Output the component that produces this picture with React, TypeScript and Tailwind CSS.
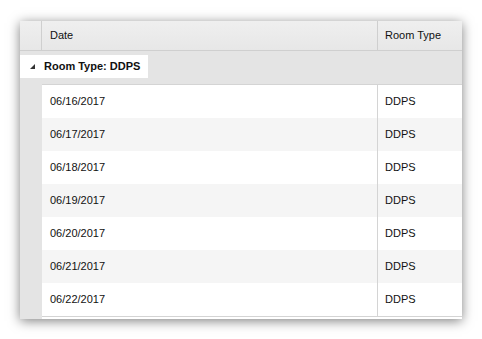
const rows = [
  "06/16/2017",
  "06/17/2017",
  "06/18/2017",
  "06/19/2017",
  "06/20/2017",
  "06/21/2017",
  "06/22/2017",
];

export default function App() {
  return (
    <div className="h-[339px] w-[482px] bg-white pl-[20px] pt-[21px] font-['Liberation_Sans',Arial,sans-serif] text-[11px] text-[#111]">
      <div className="flex h-[298px] w-[442px] flex-col bg-white shadow-[0_2px_11px_rgba(0,0,0,0.5)]">
        {/* header */}
        <div className="flex h-[30px] shrink-0 border-b border-[#cfcfcf] bg-gradient-to-b from-[#efefef] to-[#e7e7e7]">
          <div className="w-[22px] shrink-0 border-r border-[#cfcfcf]" />
          <div className="flex w-[335px] shrink-0 items-center pl-[8px]">Date</div>
          <div className="flex flex-1 items-center border-l border-[#cfcfcf] pl-[7px]">
            Room Type
          </div>
        </div>

        {/* group row */}
        <div className="flex h-[33px] shrink-0 items-start bg-[#e4e4e4] pt-[4px]">
          <div className="flex h-[23px] w-[128px] items-center bg-white">
            <svg width="5" height="5" viewBox="0 0 5 5" className="ml-[10px] mr-[9px]">
              <polygon points="5,0 5,5 0,5" fill="#333" />
            </svg>
            <span className="font-bold">Room Type: DDPS</span>
          </div>
        </div>

        {/* body */}
        <div className="flex flex-1">
          <div className="w-[22px] shrink-0 bg-[#e4e4e4]" />
          <div className="flex flex-1 flex-col">
            <div className="border-t border-[#d4d4d4]">
              {rows.map((date, i) => (
                <div
                  key={date}
                  className={`flex h-[33px] ${i % 2 === 1 ? "bg-[#f5f5f5]" : "bg-white"}`}
                >
                  <div className="flex w-[335px] shrink-0 items-center pl-[8px]">{date}</div>
                  <div className="flex flex-1 items-center border-l border-[#d4d4d4] pl-[7px]">
                    DDPS
                  </div>
                </div>
              ))}
            </div>
            <div className="border-t border-[#d4d4d4]" />
          </div>
        </div>
      </div>
    </div>
  );
}
